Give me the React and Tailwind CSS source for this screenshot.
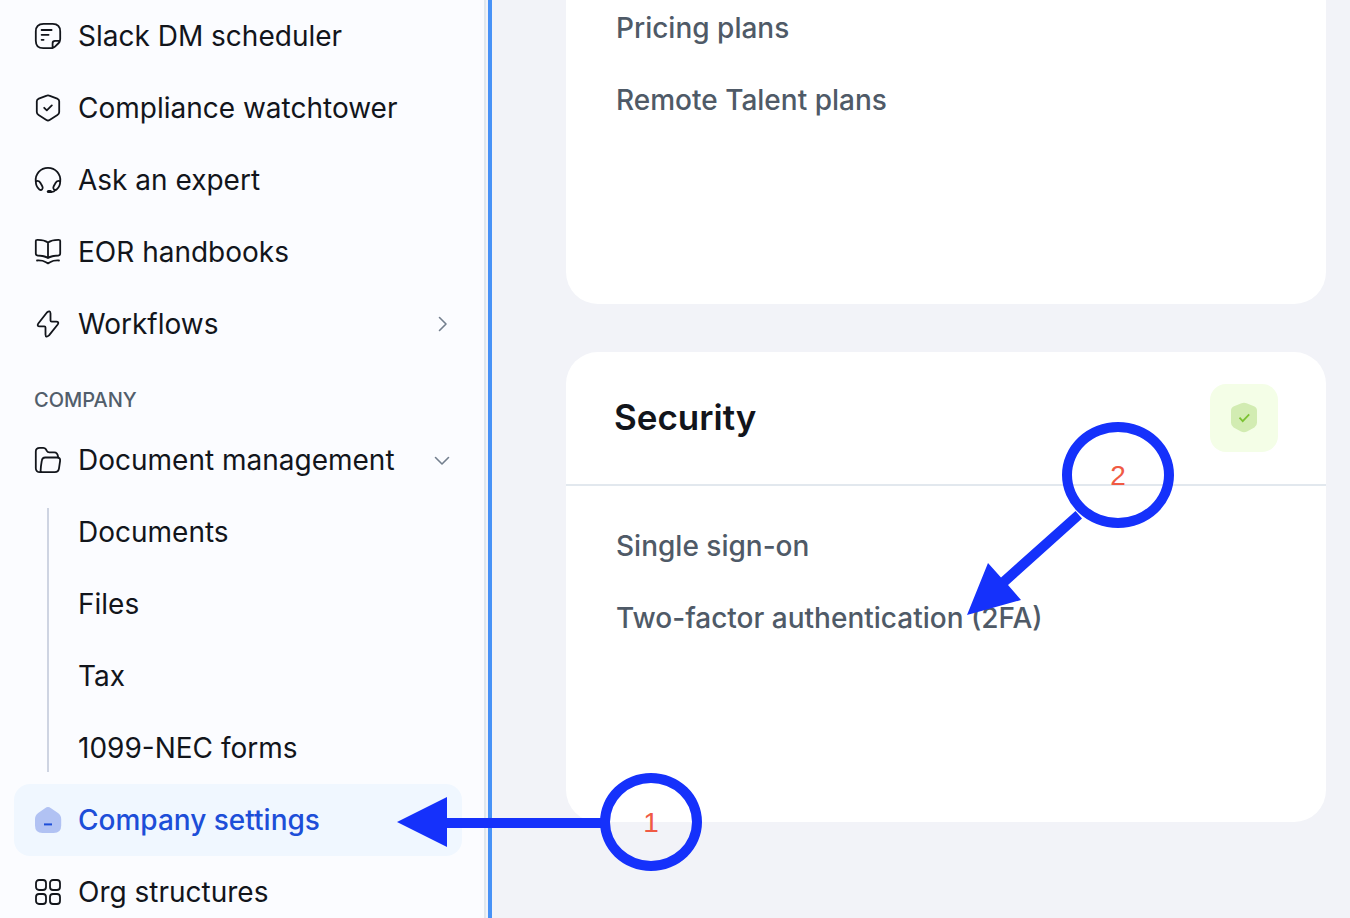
const Icon = ({ children }) => (
  <svg
    viewBox="0 0 28 28"
    fill="none"
    stroke="currentColor"
    strokeWidth="1.8"
    strokeLinecap="round"
    strokeLinejoin="round"
    aria-hidden="true"
    className="size-7 shrink-0"
  >
    {children}
  </svg>
);

const NoteIcon = () => (
  <Icon>
    <path d="M26.200 17V9.500Q26.200 1.800 18.700 1.800H9.500Q1.800 1.800 1.800 9.500v9.200q0 7.500 7.500 7.500H17.500q2 0 3.500-1.500l3.700-3.700Q26.200 19.500 26.200 17ZM18.600 26V21.200q0-2.400 2.400-2.400H26M7.600 8h10M7.600 12.800h7M7.600 17.800h2" />
  </Icon>
);

const ShieldIcon = () => (
  <Icon>
    <path d="M12.800 1.700Q14 1.200 15.200 1.700l8 2.900q2 .8 2 2.700V18q0 2-1.800 3.100l-7.800 4.900q-1.600 1-3.200 0l-7.800-4.900Q2.800 20 2.800 18V7.300q0-1.900 2-2.700ZM10.200 13.800l2.600 2.600 5-5" />
  </Icon>
);

const HeadsetIcon = () => (
  <Icon>
    <path d="M1.800 15.300C1 8 6.500 1.800 14 1.800s13 6.200 12.200 13.500" />
    <path d="M1.800 15.300c2.200-.9 4 .2 5 2.200l1.600 3c1.200 2.400-1 4.500-3 3C3 21.600 1.800 19 1.800 15.300ZM26.200 15.300c-2.200-.9-4 .2-5 2.200l-1.600 3c-1.200 2.400 1 4.500 3 3 2.400-1.900 3.600-4.500 3.600-8.200Z" />
    <path d="M21.800 23.800c-1.300 1.700-3.300 2.400-5.500 2.200" />
    <path d="M14.300 25.400h2.200" strokeWidth="3" />
  </Icon>
);

const BookIcon = () => (
  <Icon>
    <path d="M14 4.400C10.500 2 6.500 1.700 3 1.800q-1.200 0-1.200 1.200v12.500q0 1.900 1.800 2c4 .1 7.400.5 10.400 2.500 3-2 6.400-2.400 10.400-2.500q1.800-.1 1.800-2V3q0-1.200-1.200-1.200c-3.500-.1-7.500.2-11 2.600ZM14 4.400V20M3 22.500c3.500-.2 6.200.1 8.500 1.500L14 25.400l2.500-1.400c2.300-1.400 5-1.700 8.500-1.500" />
  </Icon>
);

const BoltIcon = () => (
  <Icon>
    <path d="M12.900 2.500Q16.300-.3 16.500 3.500v6.900q0 1.200 1.200 1.200h4.500q3.300 0 1.500 2.900L15 25.400Q11.700 28.300 11.500 24.500V17.600q0-1.200-1.200-1.200H5.800q-3.300 0-1.500-2.900Z" />
  </Icon>
);

const FolderIcon = () => (
  <Icon>
    <path d="M7.300 26.200H6q-4.200 0-4.200-4V5.500q0-3.700 4-3.700h3.400q1.800 0 2.700 1.500l.9 1.600q.8 1.500 2.500 1.500h4.900q3.500 0 4 5.100" />
    <path d="M11.200 11.500h12q3.300 0 2.900 3.300l-1.100 7.600q-.5 3.800-4.300 3.800H6.500q.2-5.700 1.300-11.500.5-3.200 3.400-3.200Z" />
  </Icon>
);

const HomeIcon = () => (
  <svg viewBox="0 0 28 28" aria-hidden="true" className="size-7 shrink-0">
    <path d="M11 2.200q3-2.200 6 0l7 4.800q3.200 2.300 3.200 6v6.500q0 7.500-7.500 7.500H8.500Q1 27 1 19.500V13q0-3.700 3.200-6Z" fill="#b1c2f3" />
    <path d="M10 18.400h8" stroke="#1d4ed8" strokeWidth="2" />
  </svg>
);

const GridIcon = () => (
  <Icon>
    <rect x="2" y="2" width="10" height="10" rx="3" />
    <rect x="16" y="2" width="10" height="10" rx="3" />
    <rect x="2" y="16" width="10" height="10" rx="3" />
    <rect x="16" y="16" width="10" height="10" rx="3" />
  </Icon>
);

const Chevron = ({ open }) => (
  <svg
    viewBox="0 0 20 20"
    fill="none"
    stroke="#737f8e"
    strokeWidth="1.6"
    strokeLinecap="round"
    strokeLinejoin="round"
    aria-hidden="true"
    className="ml-auto size-5 shrink-0"
  >
    <path d={open ? 'M3.500 7.500l6.500 6.500 6.500-6.500' : 'M7.500 3.500l6.500 6.500-6.500 6.500'} />
  </svg>
);

const tools = [
  { label: 'Slack DM scheduler', icon: NoteIcon },
  { label: 'Compliance watchtower', icon: ShieldIcon },
  { label: 'Ask an expert', icon: HeadsetIcon },
  { label: 'EOR handbooks', icon: BookIcon },
];

const documentLinks = ['Documents', 'Files', 'Tax', '1099-NEC forms'];

const rowClass = 'flex h-[72px] w-full items-center gap-4 rounded-2xl pr-2.5 pl-5 text-left whitespace-nowrap';

const NavLink = ({ label, icon: NavIcon }) => (
  <a href="#" className={rowClass}>
    <NavIcon />
    {label}
  </a>
);

const Sidebar = () => (
  <nav className="w-[486px] shrink-0 border-r-2 border-[#e1e8ee] bg-[#fbfcff] pr-[22px] pl-3.5 text-[28px] text-[#12151b]">
    {tools.map((item) => (
      <NavLink key={item.label} {...item} />
    ))}
    <button type="button" className={rowClass}>
      <BoltIcon />
      Workflows
      <Chevron />
    </button>

    <h2 className="flex h-16 items-center px-5 pt-4 text-xl font-medium text-[#525e6b]">COMPANY</h2>

    <button type="button" aria-expanded="true" className={rowClass}>
      <FolderIcon />
      Document management
      <Chevron open />
    </button>
    <div className="flex">
      <div className="my-3 ml-[33px] w-0.5 bg-[#ced4e2]" />
      <ul className="ml-[29px]">
        {documentLinks.map((label) => (
          <li key={label}>
            <a href="#" className="flex h-[72px] items-center">
              {label}
            </a>
          </li>
        ))}
      </ul>
    </div>
    <a href="#" aria-current="page" className={`${rowClass} bg-[#f0f7ff] font-medium text-[#1d4ed8]`}>
      <HomeIcon />
      Company settings
    </a>
    <NavLink label="Org structures" icon={GridIcon} />
  </nav>
);

const CardLinks = ({ links }) => (
  <ul className="px-[50px] text-[28px] font-medium text-[#4f5a67]">
    {links.map((label) => (
      <li key={label}>
        <a href="#" className="flex h-[72px] items-center whitespace-nowrap">
          {label}
        </a>
      </li>
    ))}
  </ul>
);

const App = () => {
  return (
    <div className="relative flex h-screen overflow-hidden bg-[#f2f3f8] font-['Inter',sans-serif] [font-optical-sizing:none]">
      <Sidebar />
      <div className="ml-0.5 w-1 shrink-0 bg-[#4892f7]" />

      <main className="flex flex-1 flex-col gap-12 pr-6 pl-[74px]">
        <section className="-mt-2 rounded-b-[32px] bg-white pb-[168px]">
          <CardLinks links={['Pricing plans', 'Remote Talent plans']} />
        </section>

        <section className="rounded-[32px] bg-white pb-[168px]">
          <header className="mb-6 flex items-center justify-between border-b-2 border-[#e2e8ee] px-12 py-8">
            <h2 className="pb-0.5 text-[35px] font-semibold text-[#12151b]">Security</h2>
            <div className="flex size-[68px] items-center justify-center rounded-2xl bg-[#f4fee7]">
              <svg viewBox="0 0 32 32" fill="none" aria-hidden="true" className="size-8">
                <path d="M13.500 1.200q2.500-1 5 0l7.500 3q3 1.400 3 4.600v12q0 3-2.600 4.600l-7.400 4.200q-3 1.400-6 0l-7.400-4.200Q3 23.800 3 20.800V8.800q0-3.200 3-4.600Z" fill="#d2ecb2" />
                <path d="M11.500 15.700l3.200 3.400 6.500-6.800" stroke="#7cc233" strokeWidth="1.8" />
              </svg>
            </div>
          </header>
          <CardLinks links={['Single sign-on', 'Two-factor authentication (2FA)']} />
        </section>
      </main>

      {/* walkthrough markers */}
      <svg viewBox="0 0 204 50" fill="#1531fb" aria-hidden="true" className="absolute top-[797px] left-[397px] h-[50px] w-[204px]">
        <path d="M0 25 50 0V21H204V31H50V50Z" />
      </svg>
      <div className="absolute top-[773px] left-[600px] flex h-[98px] w-[102px] items-center justify-center rounded-[50%] border-10 border-[#1531fb] pt-0.5 font-['Liberation_Sans',sans-serif] text-[28px] text-[#f05a44]">
        1
      </div>
      <svg viewBox="0 0 116 104" fill="#1531fb" aria-hidden="true" className="absolute top-[511px] left-[967px] h-[104px] w-[116px]">
        <path d="M0 104 21 52 34 66.500 108.500 0 115 7.500 41 74 54 89Z" />
      </svg>
      <div className="absolute top-[422px] left-[1062px] flex h-[106px] w-28 items-center justify-center rounded-[50%] border-10 border-[#1531fb] pt-0.5 font-['Liberation_Sans',sans-serif] text-[28px] text-[#f05a44]">
        2
      </div>
    </div>
  );
};

export default App;
